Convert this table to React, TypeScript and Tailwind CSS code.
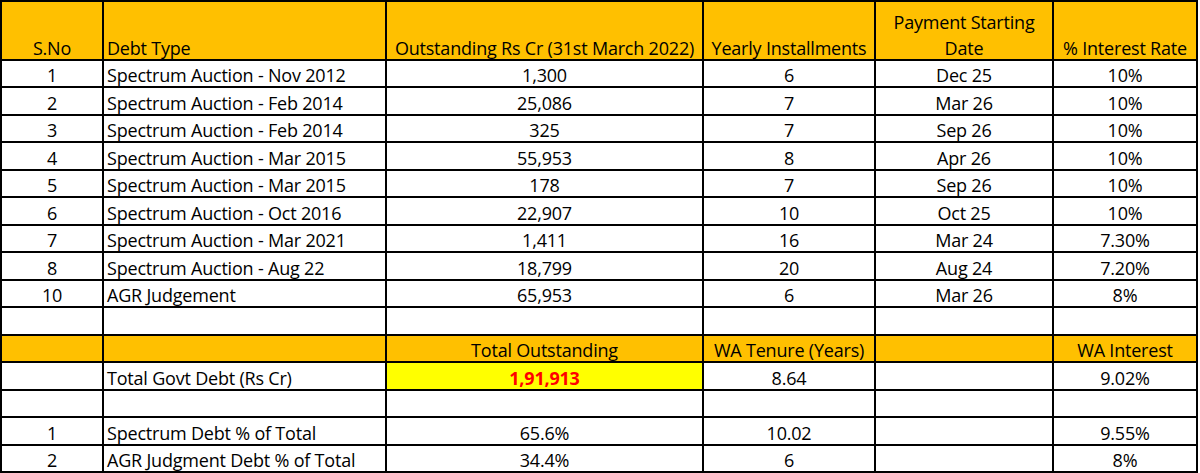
import React from "react";

type Row = {
  no?: string;
  type?: string;
  out?: string;
  inst?: string;
  date?: string;
  rate?: string;
  kind?: "data" | "blank" | "sub" | "total";
};

const ROWS: Row[] = [
  { no: "1", type: "Spectrum Auction - Nov 2012", out: "1,300", inst: "6", date: "Dec 25", rate: "10%" },
  { no: "2", type: "Spectrum Auction - Feb 2014", out: "25,086", inst: "7", date: "Mar 26", rate: "10%" },
  { no: "3", type: "Spectrum Auction - Feb 2014", out: "325", inst: "7", date: "Sep 26", rate: "10%" },
  { no: "4", type: "Spectrum Auction - Mar 2015", out: "55,953", inst: "8", date: "Apr 26", rate: "10%" },
  { no: "5", type: "Spectrum Auction - Mar 2015", out: "178", inst: "7", date: "Sep 26", rate: "10%" },
  { no: "6", type: "Spectrum Auction - Oct 2016", out: "22,907", inst: "10", date: "Oct 25", rate: "10%" },
  { no: "7", type: "Spectrum Auction - Mar 2021", out: "1,411", inst: "16", date: "Mar 24", rate: "7.30%" },
  { no: "8", type: "Spectrum Auction - Aug 22", out: "18,799", inst: "20", date: "Aug 24", rate: "7.20%" },
  { no: "10", type: "AGR Judgement", out: "65,953", inst: "6", date: "Mar 26", rate: "8%" },
  { kind: "blank" },
  { kind: "sub", out: "Total Outstanding", inst: "WA Tenure (Years)", rate: "WA Interest" },
  { kind: "total", type: "Total Govt Debt (Rs Cr)", out: "1,91,913", inst: "8.64", rate: "9.02%" },
  { kind: "blank" },
  { no: "1", type: "Spectrum Debt % of Total", out: "65.6%", inst: "10.02", rate: "9.55%" },
  { no: "2", type: "AGR Judgment Debt % of Total", out: "34.4%", inst: "6", rate: "8%" },
];

function Cell({
  children,
  left,
  bg = "bg-white",
  extra = "",
}: {
  children?: React.ReactNode;
  left?: boolean;
  bg?: string;
  extra?: string;
}) {
  return (
    <div
      className={`${bg} flex items-end leading-[22px] whitespace-nowrap ${
        left ? "justify-start pl-[3px]" : "justify-center"
      } ${extra}`}
    >
      {children}
    </div>
  );
}

export default function App() {
  const head = "bg-[#ffc000]";
  return (
    <div
      className="w-[1200px] h-[473px] bg-white text-black text-[18px] tracking-[-0.2px]"
      style={{ fontFamily: "'Open Sans', Lato, sans-serif" }}
    >
      <div className="grid h-[473px] w-[1198px] bg-black p-[2px] gap-[2px] grid-cols-[100px_281px_315px_170px_176px_142px] grid-rows-[57px_repeat(15,1fr)]">
        {/* header */}
        <Cell bg={head}>S.No</Cell>
        <Cell bg={head} left>Debt Type</Cell>
        <Cell bg={head}>Outstanding Rs Cr (31st March 2022)</Cell>
        <Cell bg={head}>Yearly Installments</Cell>
        <Cell bg={head} extra="text-center whitespace-normal">
          <span className="leading-[26px] translate-y-[2px]">
            Payment Starting
            <br />
            Date
          </span>
        </Cell>
        <Cell bg={head}>% Interest Rate</Cell>

        {ROWS.map((r, i) => {
          const bg = r.kind === "sub" ? head : "bg-white";
          return (
            <React.Fragment key={i}>
              <Cell bg={bg}>{r.no}</Cell>
              <Cell bg={bg} left>{r.type}</Cell>
              <Cell
                bg={r.kind === "total" ? "bg-[#ffff00]" : bg}
                extra={r.kind === "total" ? "text-[#ff0000] font-bold" : ""}
              >
                {r.out}
              </Cell>
              <Cell bg={bg}>{r.inst}</Cell>
              <Cell bg={bg}>{r.date}</Cell>
              <Cell bg={bg}>{r.rate}</Cell>
            </React.Fragment>
          );
        })}
      </div>
    </div>
  );
}
